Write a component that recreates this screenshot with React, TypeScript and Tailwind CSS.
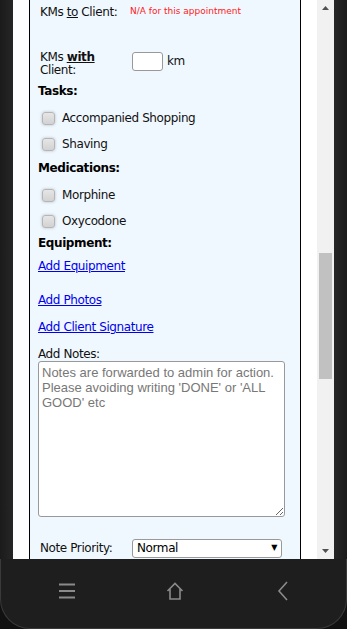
import React from 'react';

const font = { fontFamily: '"DejaVu Sans", Verdana, sans-serif' };

const Check = ({ label, first }: { label: string; first?: boolean }) => (
  <div className={first ? 'flex items-center h-[26px] pl-[4px] mt-[3px]' : 'flex items-center h-[26px] pl-[4px]'}>
    <span className="w-[13px] h-[13px] rounded-[3px] border border-[#b5b5b5] bg-[linear-gradient(#e6e6e6,#d2d2d2)] shadow-[0_0_3px_rgba(0,0,0,0.25)]" />
    <span className="ml-[7px] text-[12px] text-[#111]">{label}</span>
  </div>
);

const Heading = ({ children, tight }: { children: React.ReactNode; tight?: boolean }) => (
  <div
    className={
      tight
        ? 'h-[22px] -mt-[2px] flex items-center text-[12px] font-semibold text-black'
        : 'h-[22px] flex items-center text-[12px] font-semibold text-black'
    }
  >
    {children}
  </div>
);

const Link = ({ children }: { children: React.ReactNode }) => (
  <a href="#" className="text-[12px] text-[#0000ee] underline">{children}</a>
);

export default function App() {
  return (
    <div className="w-[347px] h-[629px] bg-[#111] flex flex-col overflow-hidden tracking-[-0.4px]" style={font}>
      <div className="flex h-[559px]">
        <div className="w-[13px] bg-[linear-gradient(90deg,#1b1b1b,#262626)]" />
        <div className="flex-1 flex bg-white">
          <div className="flex-1 overflow-hidden pl-[16px]">
            <div className="w-[272px] h-full border-x border-black bg-[#f0f8ff] pl-[8px] pr-[14px]">
              <div className="flex items-start h-[48px] pt-[3px]">
                <span className="w-[92px] pl-[2px] text-[12px] text-[#111]">
                  KMs <span className="underline">to</span> Client:
                </span>
                <span className="text-[9px] tracking-normal text-[#ff1a1a] mt-[2px]">N/A for this appointment</span>
              </div>
              <div className="flex items-center h-[32px]">
                <span className="w-[94px] pl-[2px] text-[12px] leading-[13px] text-[#111]">
                  KMs <span className="underline font-semibold">with</span>
                  <br />
                  Client:
                </span>
                <span className="w-[31px] h-[19px] bg-white border border-[#999] rounded-[3px] mb-[5px]" />
                <span className="ml-[4px] text-[12px] text-[#111] mb-[6px]">km</span>
              </div>
              <Heading>Tasks:</Heading>
              <Check label="Accompanied Shopping" first />
              <Check label="Shaving" />
              <Heading>Medications:</Heading>
              <Check label="Morphine" first />
              <Check label="Oxycodone" />
              <Heading tight>Equipment:</Heading>
              <div className="h-[24px] flex items-center">
                <Link>Add Equipment</Link>
              </div>
              <div className="h-[24px] mt-[10px] flex items-center">
                <Link>Add Photos</Link>
              </div>
              <div className="h-[30px] flex items-center">
                <Link>Add Client Signature</Link>
              </div>
              <div className="h-[19px] flex items-end text-[12px] leading-[14px] text-[#111]">Add Notes:</div>
              <textarea
                className="block w-[247px] h-[156px] bg-white border border-[#999] rounded-[3px] px-[3px] py-[3px] text-[13px] leading-[15px] tracking-normal resize-y placeholder:text-[#777] outline-none"
                placeholder="Notes are forwarded to admin for action. Please avoiding writing 'DONE' or 'ALL GOOD' etc"
                style={{ fontFamily: '"Liberation Sans", Arial, sans-serif' }}
              />
              <div className="flex items-center mt-[21px] h-[20px]">
                <span className="w-[94px] pl-[2px] text-[12px] text-[#111]">Note Priority:</span>
                <div className="w-[150px] h-[19px] bg-white border border-[#999] rounded-[3px] flex items-center justify-between px-[4px]">
                  <span className="text-[12px] text-black">Normal</span>
                  <span className="text-[8px] text-black">▼</span>
                </div>
              </div>
            </div>
          </div>
          <div className="w-[17px] bg-[#f1f1f1] flex flex-col items-center">
            <svg width="17" height="17" viewBox="0 0 17 17" className="shrink-0">
              <path d="M5 10 L8.5 6 L12 10 Z" fill="#505050" />
            </svg>
            <div className="h-[236px]" />
            <div className="w-[13px] h-[126px] bg-[#c1c1c1]" />
            <div className="flex-1" />
            <svg width="17" height="17" viewBox="0 0 17 17" className="shrink-0">
              <path d="M5 7 L12 7 L8.5 11 Z" fill="#505050" />
            </svg>
          </div>
        </div>
        <div className="w-[13px] bg-[linear-gradient(90deg,#262626,#1b1b1b)]" />
      </div>
      <div className="flex-1 bg-[#1e1e1e] rounded-b-[30px] border-x border-b border-[#3a3a3a] flex items-start pt-[22px] pl-[12px]">
        <div className="w-[108px] flex justify-center pt-[2px]">
          <svg width="16" height="16" viewBox="0 0 16 16">
            <path d="M0 1.5H16M0 8H16M0 14.5H16" stroke="#8a8a8a" strokeWidth="1.8" />
          </svg>
        </div>
        <div className="w-[108px] flex justify-center">
          <svg width="18" height="20" viewBox="0 0 18 20">
            <path d="M1.5 10L9 2.5L16.5 10M4 8V18H14V8" stroke="#8a8a8a" strokeWidth="1.6" fill="none" />
          </svg>
        </div>
        <div className="w-[108px] flex justify-center">
          <svg width="12" height="20" viewBox="0 0 12 20">
            <path d="M10 1L2 10L10 19" stroke="#8a8a8a" strokeWidth="1.6" fill="none" />
          </svg>
        </div>
      </div>
    </div>
  );
}
